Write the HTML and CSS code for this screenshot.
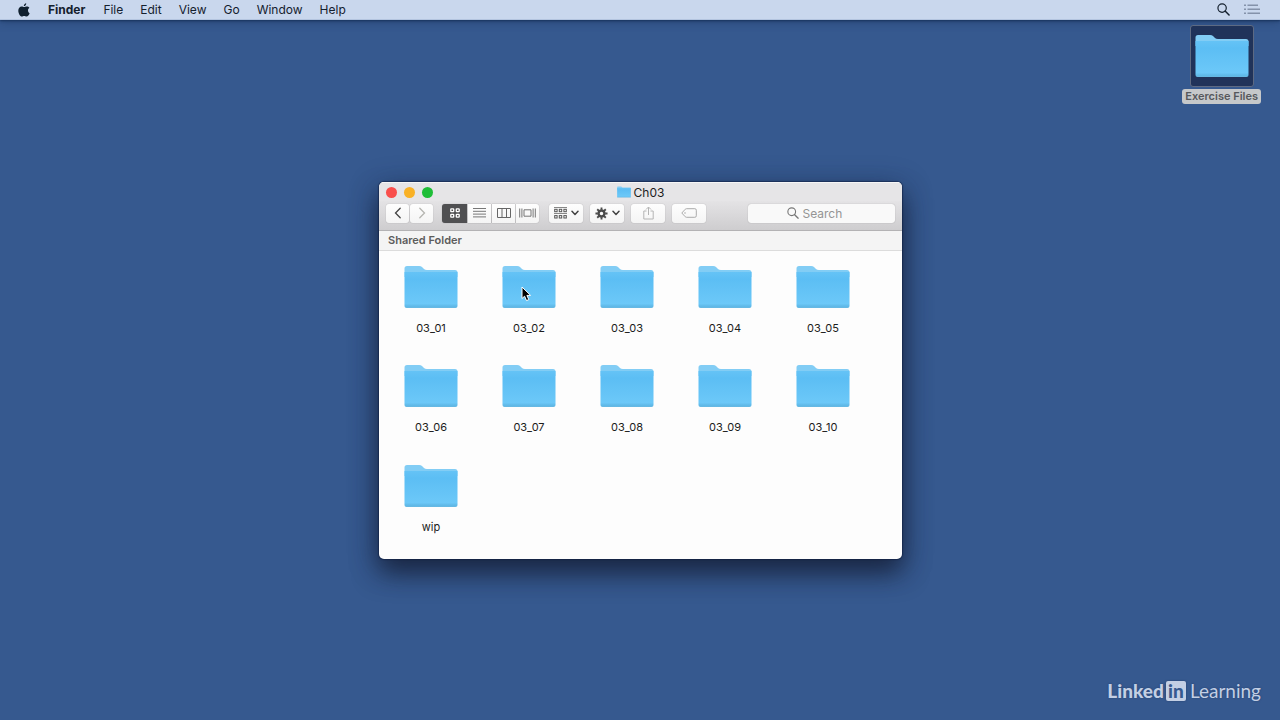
FILE: index.html
```html
<!DOCTYPE html>
<html lang="en">
<head>
    <meta charset="UTF-8">
    <meta name="viewport" content="width=device-width, initial-scale=1.0">
    <title>Finder</title>
    <link rel="stylesheet" href="styles.css">
</head>
<body>
    <!-- Shared shapes -->
    <svg class="defs" width="0" height="0" aria-hidden="true">
        <defs>
            <linearGradient id="folder-fill" x1="0" y1="0" x2="0" y2="1">
                <stop offset="0" stop-color="#65c3f6"/>
                <stop offset="0.2" stop-color="#5cbef4"/>
                <stop offset="0.88" stop-color="#6cc8f8"/>
                <stop offset="0.95" stop-color="#5fb9e8"/>
                <stop offset="1" stop-color="#68b8e2"/>
            </linearGradient>
            <symbol id="folder" viewBox="0 0 54 44">
                <path d="M0.5 8V3.5Q0.5 1 3 1H15Q17 1 18 2L20 4Q21 5 23 5H51Q53.5 5 53.5 7.5V12H0.5Z" fill="#82cdf5"/>
                <path d="M0.5 7H53.5V41Q53.5 43 51.5 43H2.5Q0.5 43 0.5 41Z" fill="url(#folder-fill)"/>
            </symbol>
            <symbol id="magnifier" viewBox="0 0 14 14">
                <circle cx="5.5" cy="5.5" r="4.5" fill="none" stroke="currentColor" stroke-width="1.3"/>
                <path d="M8.7 8.7L13 13" stroke="currentColor" stroke-width="1.6" stroke-linecap="round"/>
            </symbol>
            <symbol id="chevron" viewBox="0 0 8 6">
                <path d="M1 1.2L4 4.4L7 1.2" fill="none" stroke="#444" stroke-width="1.5" stroke-linecap="round" stroke-linejoin="round"/>
            </symbol>
        </defs>
    </svg>

    <header class="menubar">
        <nav class="menus">
            <button class="menu apple" aria-label="Apple">
                <svg width="12" height="14" viewBox="0 0 12 14">
                    <path d="M8.2 0.2C8.3 1.8 7.2 3.1 5.8 3.1C5.7 1.7 6.9 0.4 8.2 0.2Z" fill="#10202f"/>
                    <path d="M10 7.3C10 6 10.8 5.2 11.4 4.8C10.8 3.8 9.8 3.4 8.9 3.4C7.8 3.4 6.9 4 6.2 4C5.5 4 4.7 3.4 3.7 3.4C1.8 3.5 0.3 5 0.3 7.8C0.3 10.6 2.2 13.6 3.8 13.6C4.7 13.6 5.2 13 6.2 13C7.2 13 7.6 13.6 8.5 13.6C9.9 13.6 11.1 11.7 11.6 10.2C10.6 9.7 10 8.7 10 7.3Z" fill="#10202f"/>
                </svg>
            </button>
            <button class="menu app-name">Finder</button>
            <button class="menu">File</button>
            <button class="menu">Edit</button>
            <button class="menu">View</button>
            <button class="menu">Go</button>
            <button class="menu">Window</button>
            <button class="menu">Help</button>
        </nav>
        <div class="status">
            <button class="status-item" aria-label="Spotlight">
                <svg width="13" height="13"><use href="#magnifier"/></svg>
            </button>
            <button class="status-item faded" aria-label="Notification Center">
                <svg width="16" height="11" viewBox="0 0 16 11" fill="currentColor">
                    <path d="M0 0.5H2V2H0ZM3.5 0.5H14V2H3.5ZM0 4.5H2V6H0ZM3.5 4.5H16V6H3.5ZM0 8.5H2V10H0ZM3.5 8.5H16V10H3.5Z"/>
                </svg>
            </button>
        </div>
    </header>

    <main class="desktop">
        <a class="desktop-item" href="#">
            <span class="desktop-icon"><svg width="54" height="44"><use href="#folder"/></svg></span>
            <span class="desktop-label">Exercise Files</span>
        </a>

        <section class="window">
            <div class="titlebar">
                <div class="lights">
                    <button class="light close" aria-label="Close"></button>
                    <button class="light minimize" aria-label="Minimize"></button>
                    <button class="light zoom" aria-label="Zoom"></button>
                </div>
                <h1 class="title"><svg width="14" height="12"><use href="#folder"/></svg>Ch03</h1>
            </div>

            <div class="toolbar">
                <div class="group history">
                    <button class="tool" aria-label="Back">
                        <svg width="8" height="12" viewBox="0 0 8 12"><path d="M6.2 1.2L1.5 6L6.2 10.8" fill="none" stroke="#444" stroke-width="1.3" stroke-linecap="round"/></svg>
                    </button>
                    <button class="tool" aria-label="Forward">
                        <svg width="8" height="12" viewBox="0 0 8 12"><path d="M1.8 1.2L6.5 6L1.8 10.8" fill="none" stroke="#b5b5b0" stroke-width="1.3" stroke-linecap="round"/></svg>
                    </button>
                </div>

                <div class="group views">
                    <button class="tool active" aria-label="Icon view">
                        <svg width="10" height="10" viewBox="0 0 10 10" fill="none" stroke="#fff" stroke-width="1.3">
                            <rect x="0.8" y="0.8" width="2.9" height="2.9" rx="0.5"/><rect x="6.3" y="0.8" width="2.9" height="2.9" rx="0.5"/>
                            <rect x="0.8" y="6.3" width="2.9" height="2.9" rx="0.5"/><rect x="6.3" y="6.3" width="2.9" height="2.9" rx="0.5"/>
                        </svg>
                    </button>
                    <button class="tool" aria-label="List view">
                        <svg width="13" height="10" viewBox="0 0 13 10"><path d="M0 0.5H13M0 3.3H13M0 6.1H13M0 8.9H13" stroke="#777" stroke-width="1"/></svg>
                    </button>
                    <button class="tool" aria-label="Column view">
                        <svg width="14" height="10" viewBox="0 0 14 10"><path d="M0.5 0.5H13.5V9.5H0.5ZM5 0.5V9.5M9.5 0.5V9.5" fill="none" stroke="#666" stroke-width="1"/></svg>
                    </button>
                    <button class="tool" aria-label="Cover flow view">
                        <svg width="17" height="10" viewBox="0 0 17 10"><path d="M0.7 0.5V9.5M2.9 0.5V9.5M14.1 0.5V9.5M16.3 0.5V9.5M5 1.8H12V8.2H5Z" fill="none" stroke="#777" stroke-width="1"/></svg>
                    </button>
                </div>

                <button class="tool single" aria-label="Arrange by">
                    <svg width="13" height="12" viewBox="0 0 13 12" fill="none" stroke="#555" stroke-width="1">
                        <path d="M0 0.5H13M0 6.5H13" stroke="#888"/>
                        <rect x="0.7" y="2.3" width="2.4" height="2.4"/><rect x="5.3" y="2.3" width="2.4" height="2.4"/><rect x="9.9" y="2.3" width="2.4" height="2.4"/>
                        <rect x="0.7" y="8.6" width="2.4" height="2.4"/><rect x="5.3" y="8.6" width="2.4" height="2.4"/><rect x="9.9" y="8.6" width="2.4" height="2.4"/>
                    </svg>
                    <svg width="8" height="6"><use href="#chevron"/></svg>
                </button>
                <button class="tool single" aria-label="Action">
                    <svg width="13" height="13" viewBox="0 0 14 14">
                        <circle cx="7" cy="7" r="3.2" fill="none" stroke="#4a4a4a" stroke-width="2.6"/>
                        <path d="M7 0.5V3M7 11V13.5M0.5 7H3M11 7H13.5M2.4 2.4L4.2 4.2M9.8 9.8L11.6 11.6M2.4 11.6L4.2 9.8M9.8 4.2L11.6 2.4" stroke="#4a4a4a" stroke-width="2"/>
                    </svg>
                    <svg width="8" height="6"><use href="#chevron"/></svg>
                </button>
                <button class="tool single" aria-label="Share">
                    <svg width="11" height="14" viewBox="0 0 11 14"><path d="M3.5 5H0.8V13H10.2V5H7.5M5.5 9V1.2M3 3.5L5.5 1L8 3.5" fill="none" stroke="#b4b4b4" stroke-width="1"/></svg>
                </button>
                <button class="tool single" aria-label="Edit tags">
                    <svg width="16" height="10" viewBox="0 0 16 10"><path d="M4.2 1.3Q4.8 0.7 5.6 0.7H13.8Q15.3 0.7 15.3 2.2V7.8Q15.3 9.3 13.8 9.3H5.6Q4.8 9.3 4.2 8.7L0.8 5Z" fill="none" stroke="#aaa" stroke-width="1"/><circle cx="4" cy="5" r="0.8" fill="#aaa"/></svg>
                </button>

                <label class="search">
                    <svg width="12" height="12"><use href="#magnifier"/></svg>
                    <input type="search" placeholder="Search" aria-label="Search">
                </label>
            </div>

            <h2 class="shared">Shared Folder</h2>

            <div class="files">
                <a class="file" href="#"><svg width="54" height="44"><use href="#folder"/></svg>03_01</a>
                <a class="file" href="#"><svg width="54" height="44"><use href="#folder"/></svg>03_02</a>
                <a class="file" href="#"><svg width="54" height="44"><use href="#folder"/></svg>03_03</a>
                <a class="file" href="#"><svg width="54" height="44"><use href="#folder"/></svg>03_04</a>
                <a class="file" href="#"><svg width="54" height="44"><use href="#folder"/></svg>03_05</a>
                <a class="file" href="#"><svg width="54" height="44"><use href="#folder"/></svg>03_06</a>
                <a class="file" href="#"><svg width="54" height="44"><use href="#folder"/></svg>03_07</a>
                <a class="file" href="#"><svg width="54" height="44"><use href="#folder"/></svg>03_08</a>
                <a class="file" href="#"><svg width="54" height="44"><use href="#folder"/></svg>03_09</a>
                <a class="file" href="#"><svg width="54" height="44"><use href="#folder"/></svg>03_10</a>
                <a class="file" href="#"><svg width="54" height="44"><use href="#folder"/></svg>wip</a>
            </div>
        </section>

        <svg class="cursor" width="11" height="16" viewBox="0 0 11 16" aria-hidden="true">
            <path d="M1 1V12.5L3.6 10.2L5.5 14.6L7.8 13.6L5.9 9.4H9.6Z" fill="#000" stroke="#fff" stroke-width="1"/>
        </svg>

        <div class="brand">
            <span class="brand-bold">Linked</span>
            <span class="brand-box">in</span>
            <span class="brand-light">Learning</span>
        </div>
    </main>
</body>
</html>
```
FILE: styles.css
```css
* {
    box-sizing: border-box;
}

body {
    margin: 0;
    min-height: 100vh;
    display: flex;
    flex-direction: column;
    background-color: #36598f;
    font-family: Inter, "Liberation Sans", sans-serif;
    font-size: 12px;
    color: #1c1c1c;
}

button {
    border: none;
    padding: 0;
    background: none;
    font: inherit;
    color: inherit;
}

a {
    color: inherit;
    text-decoration: none;
}

svg {
    display: block;
    flex: none;
}

.defs {
    position: absolute;
}

/* Menu bar */
.menubar {
    height: 20px;
    display: flex;
    justify-content: space-between;
    align-items: center;
    padding: 0 20px 0 18px;
    background: #c9d7ed;
    border-bottom: 1px solid #b3c4df;
    box-shadow: 0 1px 2px #17325c, 0 2px 10px rgba(20, 40, 80, 0.4);
    color: #14202e;
}

.menus {
    display: flex;
    align-items: center;
    gap: 17px;
}

.app-name {
    margin: 0 1px;
    font-weight: 700;
}

.status {
    display: flex;
    align-items: center;
    gap: 14px;
}

.faded {
    color: #8492aa;
}

/* Desktop */
.desktop {
    flex: 1;
    position: relative;
}

.desktop-item {
    position: absolute;
    top: 5px;
    right: 19px;
    display: flex;
    flex-direction: column;
    align-items: center;
    gap: 2px;
}

.desktop-icon {
    padding: 8px 4px;
    background: #20335a;
    border: 1px solid #5d6a83;
    border-radius: 3px;
}

.desktop-label {
    padding: 0 3px;
    background: #c6c8ca;
    border-radius: 3px;
    font-size: 11px;
    font-weight: 600;
    line-height: 15px;
    color: #56585c;
}

/* Finder window */
.window {
    position: absolute;
    left: 379px;
    top: 162px;
    width: 523px;
    min-height: 377px;
    display: flex;
    flex-direction: column;
    background: #fdfdfd;
    border-radius: 5px;
    overflow: hidden;
    box-shadow: 0 0 1px 1px rgba(15, 30, 65, 0.6), 0 14px 26px rgba(20, 28, 50, 0.75), 0 6px 30px rgba(20, 35, 70, 0.4);
}

.titlebar {
    display: grid;
    grid-template-columns: 1fr auto 1fr;
    align-items: center;
    height: 19px;
    padding: 0 7px;
    background: #e6e5e7;
    border-top: 1px solid #f6f6f6;
}

.lights {
    display: flex;
    gap: 7px;
}

.light {
    width: 11px;
    height: 11px;
    border-radius: 50%;
}

.close {
    background: #f94f4c;
}

.minimize {
    background: #f9b125;
}

.zoom {
    background: #1fbe38;
}

.title {
    margin: 0;
    display: flex;
    align-items: center;
    gap: 3px;
    font-size: 12px;
    font-weight: 400;
}

.toolbar {
    display: flex;
    align-items: center;
    gap: 7px;
    height: 30px;
    padding: 0 7px 5px;
    background: linear-gradient(#e4e3e5, #cecdcf);
    border-bottom: 1px solid #b3b2b4;
}

.group {
    display: flex;
    gap: 1px;
}

.history {
    margin-right: 2px;
}

.tool {
    width: 23px;
    height: 19px;
    display: flex;
    justify-content: center;
    align-items: center;
    background: linear-gradient(#fefefe, #f4f4f4);
    border-radius: 3px;
    box-shadow: 0 0 1px rgba(0, 0, 0, 0.35);
}

.views {
    margin-right: 3px;
}

.views .tool {
    border-radius: 0;
}

.views .tool:first-child {
    width: 25px;
    border-radius: 3px 0 0 3px;
}

.views .tool:last-child {
    border-radius: 0 3px 3px 0;
}

.views .active {
    background: #505052;
}

.single {
    width: 34px;
    gap: 4px;
}

.search {
    flex: 0 0 147px;
    height: 19px;
    margin-left: auto;
    display: flex;
    justify-content: center;
    align-items: center;
    gap: 4px;
    background: #f9f9f9;
    border-radius: 3px;
    box-shadow: 0 0 1px rgba(0, 0, 0, 0.35);
    color: #777;
}

.search input {
    appearance: none;
    width: 54px;
    padding: 0;
    border: none;
    outline: none;
    background: none;
    font: inherit;
}

.search input::-webkit-search-cancel-button {
    display: none;
}

.search input::placeholder {
    color: #949494;
}

.shared {
    margin: 0;
    padding: 0 9px;
    background: #f4f4f4;
    border-bottom: 1px solid #dcdcdc;
    font-size: 11px;
    font-weight: 600;
    line-height: 19px;
    color: #5c5c5c;
}

.files {
    flex: 1;
    display: grid;
    grid-template-columns: repeat(5, 1fr);
    grid-auto-rows: 1fr;
    padding: 10px 30px 0 3px;
}

.file {
    display: flex;
    flex-direction: column;
    align-items: center;
    gap: 12px;
    padding-top: 4px;
    font-size: 11px;
    line-height: 15px;
}

.cursor {
    position: absolute;
    left: 521px;
    top: 266px;
}

/* Watermark */
.brand {
    position: absolute;
    right: 19px;
    bottom: 19px;
    display: flex;
    align-items: center;
    font-family: Lato, "Liberation Sans", sans-serif;
    font-size: 19px;
    line-height: 20px;
    color: #c3cfe4;
    text-shadow: 0 0 2px #223e6c;
}

.brand-bold {
    font-weight: 900;
}

.brand-box {
    width: 20px;
    height: 20px;
    margin: 0 4px 0 2px;
    background: #c3cfe4;
    border-radius: 2px;
    box-shadow: 0 0 2px #223e6c;
    font-weight: 900;
    text-align: center;
    text-shadow: none;
    color: #36598f;
}
```
